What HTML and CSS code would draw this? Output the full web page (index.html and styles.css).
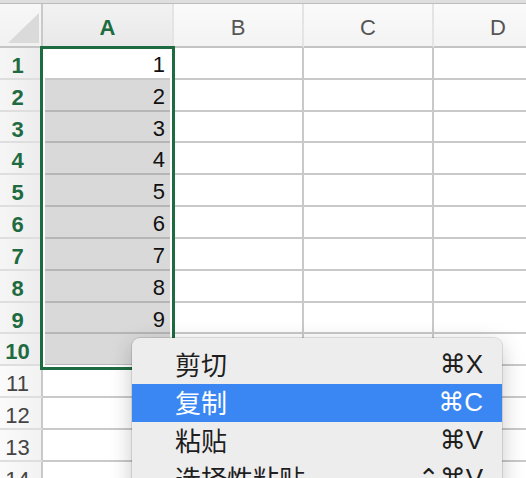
FILE: index.html
```html
<!DOCTYPE html>
<html lang="zh">
<head>
    <meta charset="UTF-8">
    <meta name="viewport" content="width=device-width, initial-scale=1.0">
    <title>表格</title>
    <link rel="stylesheet" href="styles.css">
</head>
<body>
    <div class="topbar"></div>
    <div class="sheet">
        <div class="corner">
            <svg width="43" height="42" viewBox="0 0 43 42"><polygon points="8,39 39,39 39,9" fill="#dadada"/></svg>
        </div>
        <div class="colhead sel">A</div>
        <div class="colhead">B</div>
        <div class="colhead">C</div>
        <div class="colhead">D</div>

        <div class="rowhead sel">1</div><div class="cell active">1</div><div class="cell"></div><div class="cell"></div><div class="cell"></div>
        <div class="rowhead sel">2</div><div class="cell fill">2</div><div class="cell"></div><div class="cell"></div><div class="cell"></div>
        <div class="rowhead sel">3</div><div class="cell fill">3</div><div class="cell"></div><div class="cell"></div><div class="cell"></div>
        <div class="rowhead sel">4</div><div class="cell fill">4</div><div class="cell"></div><div class="cell"></div><div class="cell"></div>
        <div class="rowhead sel">5</div><div class="cell fill">5</div><div class="cell"></div><div class="cell"></div><div class="cell"></div>
        <div class="rowhead sel">6</div><div class="cell fill">6</div><div class="cell"></div><div class="cell"></div><div class="cell"></div>
        <div class="rowhead sel">7</div><div class="cell fill">7</div><div class="cell"></div><div class="cell"></div><div class="cell"></div>
        <div class="rowhead sel">8</div><div class="cell fill">8</div><div class="cell"></div><div class="cell"></div><div class="cell"></div>
        <div class="rowhead sel">9</div><div class="cell fill">9</div><div class="cell"></div><div class="cell"></div><div class="cell"></div>
        <div class="rowhead sel">10</div><div class="cell fill">10</div><div class="cell"></div><div class="cell"></div><div class="cell"></div>
        <div class="rowhead">11</div><div class="cell"></div><div class="cell"></div><div class="cell"></div><div class="cell"></div>
        <div class="rowhead">12</div><div class="cell"></div><div class="cell"></div><div class="cell"></div><div class="cell"></div>
        <div class="rowhead">13</div><div class="cell"></div><div class="cell"></div><div class="cell"></div><div class="cell"></div>
        <div class="rowhead">14</div><div class="cell"></div><div class="cell"></div><div class="cell"></div><div class="cell"></div>
    </div>

    <div class="selection"></div>

    <div class="menu">
        <div class="item"><span>剪切</span><span class="key">⌘X</span></div>
        <div class="item active"><span>复制</span><span class="key">⌘C</span></div>
        <div class="item"><span>粘贴</span><span class="key">⌘V</span></div>
        <div class="item"><span>选择性粘贴</span><span class="key">⌃⌘V</span></div>
    </div>
</body>
</html>
```

FILE: styles.css
```css
body {
    margin: 0;
    background-color: #ffffff;
    font-family: 'Liberation Sans', Arial, 'Noto Sans CJK SC', sans-serif;
    overflow: hidden;
    width: 526px;
    height: 478px;
    position: relative;
}

.topbar {
    height: 3px;
    background-color: #dedede;
    border-bottom: 1px solid #bdbdbd;
}

.sheet {
    display: grid;
    grid-template-columns: 43px 131px 130px 130px 130px;
    grid-template-rows: 44px;
    grid-auto-rows: 31.83px;
    width: 564px;
}

.sheet > div {
    box-sizing: border-box;
}

.corner {
    background: linear-gradient(#f7f7f7, #f1f1f1);
    border-right: 2px solid #c9c9c9;
    border-bottom: 2px solid #c4c4c4;
    overflow: hidden;
}

.corner svg {
    display: block;
}

.colhead {
    background: linear-gradient(#fafafa, #f3f3f3);
    border-right: 2px solid #e4e4e4;
    border-bottom: 2px solid #c4c4c4;
    font-size: 22px;
    color: #555;
    text-align: center;
    line-height: 44px;
    padding-top: 2px;
}

.colhead.sel {
    background: linear-gradient(#f2f2f2, #e9e9e9);
    color: #1f6b41;
    font-weight: bold;
}

.rowhead {
    background: linear-gradient(to right, #fbfbfb, #f2f2f2);
    border-right: 2px solid #c9c9c9;
    border-bottom: 2px solid #dedede;
    font-size: 22px;
    color: #444;
    text-align: center;
    padding-right: 6px;
    padding-top: 5px;
    line-height: 26px;
}

.rowhead.sel {
    background: linear-gradient(to right, #f6f6f6, #ececec);
    color: #1f6b41;
    font-weight: bold;
}

.cell {
    border-right: 2px solid #c9c9c9;
    border-bottom: 2px solid #c9c9c9;
    font-size: 22px;
    color: #111;
    text-align: right;
    padding-right: 7px;
    padding-top: 4px;
    line-height: 26px;
}

.cell.fill {
    background-color: #dad9da;
    border-bottom-color: #b6b6b6;
}

.selection {
    position: absolute;
    left: 40px;
    top: 46px;
    width: 135px;
    height: 324px;
    box-sizing: border-box;
    border: 3px solid #1f6b41;
    box-shadow: inset 0 0 0 2px #ffffff;
}

.menu {
    position: absolute;
    left: 132px;
    top: 338px;
    width: 370px;
    padding-top: 8px;
    background-color: #ededed;
    border-radius: 8px;
    box-shadow: 0 0 0 1px rgba(0, 0, 0, 0.1), 0 6px 22px rgba(0, 0, 0, 0.22);
}

.item {
    display: flex;
    justify-content: space-between;
    align-items: center;
    box-sizing: border-box;
    height: 38px;
    padding: 0 19px 4px 43px;
    font-family: 'Noto Sans CJK SC', sans-serif;
    font-size: 26px;
    color: #1e1e1e;
}

.item .key {
    font-family: 'Liberation Sans', 'DejaVu Sans', sans-serif;
    padding-top: 3px;
}

.item.active {
    background-color: #3a87f4;
    color: #ffffff;
}
```
